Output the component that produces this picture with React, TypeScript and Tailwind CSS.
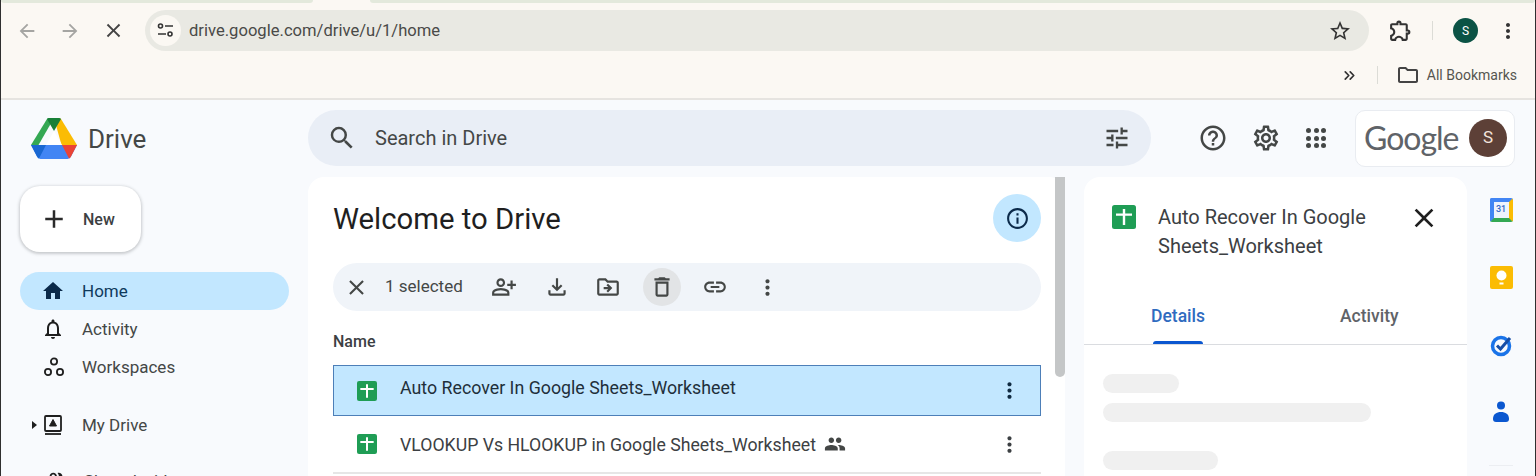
import { MdArrowBack, MdArrowForward, MdClose, MdStarBorder, MdOutlineExtension, MdMoreVert, MdOutlineFolder, MdSearch, MdTune, MdOutlineHelpOutline, MdOutlineSettings, MdAdd, MdOutlineNotifications, MdHome, MdOutlinePersonAddAlt, MdOutlineFileDownload, MdOutlineDriveFileMove, MdOutlineDelete, MdLink, MdOutlineInfo, MdPeople, MdOutlinePeopleAlt } from 'react-icons/md';
import { LuChevronsRight } from 'react-icons/lu';

const font = "font-['Roboto','Noto_Sans',sans-serif]";

const SheetsIcon = ({ size }: { size: number }) => (
  <svg width={size} height={size} viewBox="0 0 24 24">
    <rect x="0" y="0" width="24" height="24" rx="2.5" fill="#1f9d55" />
    <path d="M10.800 4h2.400v4.500H20v2.300h-6.800V20h-2.400v-9.200H4V8.500h6.800z" fill="#fff" />
  </svg>
);

const DriveLogo = () => (
  <svg width="46" height="41" viewBox="0 0 46 41">
    <path d="M16 1a3 3 0 0 1 2-1h5L7.500 27H0z" fill="#34a853" />
    <path d="M23 0h5a3 3 0 0 1 2 1l16 26H30.500z" fill="#fbbc04" />
    <path d="M16 1a3 3 0 0 1 2-1h10a3 3 0 0 1 2 1l-7 12z" fill="#188038" />
    <path d="M15 27h31l-6 11.500a4 4 0 0 1-3.500 2.500h-27a4 4 0 0 1-3.500-2.500L0 27z" fill="#4285f4" />
    <path d="M0 27h15l-7 13.500a4 4 0 0 1-2-2z" fill="#1967d2" />
    <path d="M31 27h15l-6 11.500a4 4 0 0 1-2 2z" fill="#ea4335" />
    <path d="M23 13l8 14H15z" fill="#fff" />
  </svg>
);

const NavItem = ({ icon, label, active }: { icon: React.ReactNode; label: string; active?: boolean }) => (
  <div className={`flex h-[38px] w-[269px] items-center rounded-full pl-[23px] ${active ? 'bg-[#c2e7ff] text-[#0f3a5c]' : 'text-[#444746]'}`}>
    <span className="flex w-[39px] items-center">{icon}</span>
    <span className="pt-[2px] text-[17px]">{label}</span>
  </div>
);

const Skeleton = ({ w, mt }: { w: string; mt: string }) => (
  <div className={`h-[19px] rounded-full bg-[#f0f0f0] ${w} ${mt}`} />
);

export default function App() {
  return (
    <div className={`${font} flex h-[476px] w-[1536px] flex-col overflow-hidden border-x border-[#2f2f2f] bg-[#f8fafd]`}>
      {/* browser chrome */}
      <div className="flex h-[100px] shrink-0 flex-col border-b-2 border-[#e6e4e0] bg-[#fbf8f3]">
        <div className="flex h-[3px] justify-between">
          <div className="w-[312px] rounded-b-[3px] bg-[#e3e9dc]" />
          <div className="w-[1165px] rounded-b-[3px] bg-[#e3e9dc]" />
        </div>
        <div className="flex h-[55px] items-center">
          <MdArrowBack className="ml-[15px] h-[22px] w-[22px] text-[#a5a5a2]" />
          <MdArrowForward className="ml-[21px] h-[22px] w-[22px] text-[#a5a5a2]" />
          <MdClose className="ml-[21px] h-[23px] w-[23px] text-[#444]" />
          <div className="ml-[20px] flex h-[41px] w-[1224px] items-center rounded-full bg-[#e9e9e3] pl-[5px] pr-[17px]">
            <div className="flex h-[31px] w-[31px] items-center justify-center rounded-full bg-[#fbf8f3]">
              <svg width="17" height="15" viewBox="0 0 17 15" fill="none" stroke="#333" strokeWidth="1.6">
                <circle cx="3.500" cy="3" r="2" />
                <path d="M8 3h8M1 11h8" />
                <circle cx="13" cy="11" r="2" />
              </svg>
            </div>
            <span className="ml-[8px] mt-[2px] text-[16.6px] text-[#4a4a48]">drive.google.com/drive/u/1/home</span>
            <MdStarBorder className="ml-auto h-[24px] w-[24px] text-[#333]" />
          </div>
          <MdOutlineExtension className="ml-[19px] h-[25px] w-[25px] text-[#333]" />
          <div className="ml-[19px] h-[19px] w-px bg-[#dcdcd6]" />
          <div className="ml-[20px] flex h-[25px] w-[25px] items-center justify-center rounded-full bg-[#0b5345] text-[12px] text-white">S</div>
          <MdMoreVert className="ml-[18px] h-[24px] w-[24px] text-[#333]" />
        </div>
        <div className="flex flex-1 items-center justify-end pr-[18px] pb-[6px]">
          <LuChevronsRight className="h-[17px] w-[17px] text-[#333]" strokeWidth={2.4} />
          <div className="ml-[19px] h-[18px] w-px bg-[#dcdcd6]" />
          <MdOutlineFolder className="ml-[18px] h-[24px] w-[24px] text-[#444]" />
          <span className="ml-[7px] text-[14px] text-[#55554f]">All Bookmarks</span>
        </div>
      </div>

      {/* drive header */}
      <div className="flex h-[77px] shrink-0 items-center pb-[1px]">
        <div className="ml-[30px] flex w-[277px] items-center">
          <DriveLogo />
          <span className="ml-[11px] mt-[2px] text-[26px] text-[#444746]">Drive</span>
        </div>
        <div className="flex h-[56px] w-[843px] items-center rounded-full bg-[#e9eef6] pl-[19px] pr-[20px]">
          <MdSearch className="h-[30px] w-[30px] text-[#444746]" />
          <span className="ml-[18px] text-[20px] text-[#444746]">Search in Drive</span>
          <MdTune className="ml-auto h-[28px] w-[28px] text-[#444746]" />
        </div>
        <MdOutlineHelpOutline className="ml-[47px] h-[30px] w-[30px] text-[#444746]" />
        <MdOutlineSettings className="ml-[23px] h-[30px] w-[30px] text-[#444746]" />
        <div className="ml-[25px] grid h-[20px] w-[20px] grid-cols-3 gap-[2.500px]">
          {[...Array(9)].map((_, i) => (
            <span key={i} className="rounded-full bg-[#444746]" />
          ))}
        </div>
        <div className="ml-[29px] flex h-[57px] w-[160px] items-center rounded-[10px] border border-[#e9ecf1] bg-white pl-[8px]">
          <span className="font-['Lato',sans-serif] text-[32px] tracking-[-1px] text-[#5f6368]">Google</span>
          <div className="ml-auto mr-[7px] flex h-[38px] w-[38px] items-center justify-center rounded-full bg-[#5d4037] text-[17px] text-[#f3e4dc]">S</div>
        </div>
      </div>

      {/* body */}
      <div className="flex flex-1 overflow-hidden">
        {/* sidebar */}
        <div className="w-[307px] shrink-0 pl-[19px] pt-[9px]">
          <div className="flex h-[66px] w-[121px] items-center rounded-[20px] bg-white pl-[19px] shadow-[0_1px_3px_1px_rgba(60,64,67,0.25)]">
            <MdAdd className="h-[30px] w-[30px] text-[#2a2a2a]" />
            <span className="ml-[14px] pt-[2px] text-[16px] font-medium text-[#3c4043]">New</span>
          </div>
          <div className="mt-[20px]">
            <NavItem active label="Home" icon={<MdHome className="-ml-[2px] h-[24px] w-[24px] text-[#0b2a4a]" />} />
            <NavItem label="Activity" icon={<MdOutlineNotifications className="-ml-[2px] h-[24px] w-[24px] text-[#1f1f1f]" />} />
            <NavItem
              label="Workspaces"
              icon={
                <svg width="22" height="22" viewBox="0 0 22 22" fill="none" stroke="#1f1f1f" strokeWidth="1.8">
                  <circle cx="11" cy="5.500" r="3.100" />
                  <circle cx="5" cy="16" r="3.100" />
                  <circle cx="17" cy="16" r="3.100" />
                </svg>
              }
            />
          </div>
          <div className="relative mt-[20px]">
            <svg className="absolute left-[12px] top-[15px]" width="5" height="8" viewBox="0 0 5 8">
              <path d="M0 0l5 4-5 4z" fill="#1f1f1f" />
            </svg>
            <NavItem
              label="My Drive"
              icon={
                <svg width="20" height="21" viewBox="0 0 20 21" fill="none" stroke="#1f1f1f" strokeWidth="1.8">
                  <rect x="2" y="1" width="16" height="15" rx="1" />
                  <path d="M2 19h16" />
                  <path d="M10 4.500 13.500 11h-7z" fill="#1f1f1f" strokeWidth="1" />
                </svg>
              }
            />
          </div>
          <div className="mt-[25px] flex items-start pl-[28px] text-[#444746]">
            <MdOutlinePeopleAlt className="-ml-[3px] h-[22px] w-[22px] text-[#1f1f1f]" />
            <span className="ml-[17px] text-[17px]">Shared with me</span>
          </div>
        </div>

        {/* main */}
        <div className="relative w-[757px] shrink-0 rounded-t-[16px] bg-white pl-[25px]">
          <div className="flex h-[86px] w-[708px] items-center justify-between">
            <h1 className="text-[29.3px] text-[#1f1f1f]">Welcome to Drive</h1>
            <div className="mb-[4px] flex h-[48px] w-[48px] items-center justify-center rounded-full bg-[#c2e7ff]">
              <MdOutlineInfo className="h-[25px] w-[25px] text-[#0b2a4a]" />
            </div>
          </div>
          <div className="flex h-[48px] w-[708px] items-center rounded-full bg-[#f0f4f9] pl-[11px] text-[#444746]">
            <MdClose className="h-[25px] w-[25px]" />
            <span className="ml-[16px] w-[79px] text-[17px]">1 selected</span>
            <MdOutlinePersonAddAlt className="ml-[27px] h-[26px] w-[26px]" />
            <MdOutlineFileDownload className="ml-[27px] h-[26px] w-[26px]" />
            <MdOutlineDriveFileMove className="ml-[25px] h-[26px] w-[26px]" />
            <div className="ml-[22px] flex h-[38px] w-[38px] items-center justify-center rounded-full bg-[#e2e4e6]">
              <MdOutlineDelete className="h-[26px] w-[26px]" />
            </div>
            <MdLink className="ml-[21px] h-[26px] w-[26px]" />
            <MdMoreVert className="ml-[27px] h-[25px] w-[25px]" />
          </div>
          <div className="flex h-[54px] w-[708px] items-center pt-[8px] text-[16px] font-medium text-[#3c4043]">Name</div>
          <div className="flex h-[51px] w-[708px] items-center border border-[#4d7fb8] bg-[#c2e7ff] pl-[23px] pr-[18px] text-[#1f2f3a]">
            <SheetsIcon size={20} />
            <span className="mb-[5px] ml-[23px] text-[17.800px]">Auto Recover In Google Sheets_Worksheet</span>
            <MdMoreVert className="ml-auto h-[25px] w-[25px] text-[#0f2a40]" />
          </div>
          <div className="flex h-[58px] w-[708px] items-center border-b-2 border-[#e6e6e6] pl-[24px] pr-[19px] text-[#3c4043]">
            <SheetsIcon size={20} />
            <span className="ml-[23px] mt-[2px] text-[17.700px]">VLOOKUP Vs HLOOKUP in Google Sheets_Worksheet</span>
            <MdPeople className="ml-[8px] h-[22px] w-[22px] text-[#444746]" />
            <MdMoreVert className="ml-auto h-[25px] w-[25px] text-[#3c4043]" />
          </div>
          {/* scrollbar */}
          <div className="absolute right-0 top-0 h-[200px] w-[10px] rounded-b-full bg-[#c4c6c7]" />
        </div>

        {/* details panel */}
        <div className="ml-[19px] w-[383px] shrink-0 rounded-t-[16px] bg-white">
          <div className="flex h-[119px] items-start pl-[28px] pt-[26px]">
            <div className="pt-[2px]">
              <SheetsIcon size={24} />
            </div>
            <div className="ml-[22px] w-[236px] text-[20px] leading-[29px] text-[#3c4043]">
              Auto Recover In Google Sheets_Worksheet
            </div>
            <MdClose className="ml-[14px] -mt-[1px] h-[32px] w-[32px] text-[#1f1f1f]" />
          </div>
          <div className="flex h-[49px] border-b border-[#dadce0]">
            <div className="relative w-[190px] pl-[67px] pt-[7px] text-[17.500px] font-medium text-[#2f6bc0]">
              Details
              <div className="absolute left-[69px] bottom-0 h-[3px] w-[50px] rounded-t-full bg-[#0b57d0]" />
            </div>
            <div className="pl-[66px] pt-[7px] text-[17.500px] font-medium text-[#5f6368]">Activity</div>
          </div>
          <div className="pl-[19px] pt-[29px]">
            <Skeleton w="w-[76px]" mt="mt-0" />
            <Skeleton w="w-[268px]" mt="mt-[10px]" />
            <Skeleton w="w-[115px]" mt="mt-[29px]" />
          </div>
        </div>

        {/* side apps */}
        <div className="flex w-[69px] flex-col items-center pt-[21px]">
          <div className="relative h-[24px] w-[23px] rounded-[2px] border-[4px] border-[#4285f4] border-b-[#34a853] border-r-[#fbbc04] bg-[#eef3fd]">
            <span className="absolute inset-0 flex items-center justify-center text-[9px] font-medium text-[#3367c8]">31</span>
          </div>
          <div className="mt-[44px] flex h-[23px] w-[23px] items-center justify-center rounded-[2px] bg-[#fbbc04]">
            <svg width="11" height="15" viewBox="0 0 11 15">
              <circle cx="5.500" cy="5.500" r="5" fill="#fff" />
              <rect x="3.500" y="12.500" width="4" height="2" fill="#fff" />
            </svg>
          </div>
          <svg className="mt-[44px]" width="24" height="24" viewBox="0 0 24 24" fill="none">
            <circle cx="12" cy="13" r="8.500" stroke="#1a73e8" strokeWidth="3.500" />
            <path d="m8 12.500 3.500 3.500L21 5" stroke="#174ea6" strokeWidth="3" />
          </svg>
          <svg className="mt-[44px]" width="18" height="21" viewBox="0 0 18 21" fill="#0b57d0">
            <circle cx="9" cy="4.500" r="4" />
            <path d="M1 18c0-5 3.500-7 8-7s8 2 8 7a3 3 0 0 1-3 3H4a3 3 0 0 1-3-3z" />
          </svg>
          <div className="mt-[43px] h-px w-[24px] bg-[#eceef2]" />
        </div>
      </div>
    </div>
  );
}
